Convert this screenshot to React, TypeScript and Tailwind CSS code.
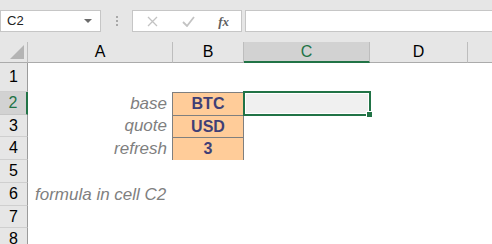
import React from "react"

const font = { fontFamily: '"Liberation Sans", Arial, sans-serif' }

const rowHeights = [29, 23, 22, 23, 23, 23, 22, 22]
const cols = ["A", "B", "C", "D", ""]

function RowHeader({ n, active }: { n: number; active?: boolean }) {
  return (
    <div
      className={
        "flex items-center justify-center text-[16px] border-b " +
        (active
          ? "bg-[#d2d2d2] text-[#217346] border-b-[#c6c6c6] border-r-2 border-r-[#217346]"
          : "bg-[#e6e6e6] text-black border-b-[#cfcfcf] border-r border-r-[#9b9b9b]")
      }
    >
      {n}
    </div>
  )
}

function InputCell({ children }: { children: React.ReactNode }) {
  return (
    <div className="bg-[#ffcc99] border border-[#7f7f7f] -mb-px -ml-px flex items-center justify-center text-[16px] font-bold text-[#3f3f76]">
      {children}
    </div>
  )
}

function Label({ children }: { children: React.ReactNode }) {
  return (
    <div className="bg-white flex items-center justify-end pr-[6px] text-[17px] italic text-[#7f7f7f]">{children}</div>
  )
}

export default function App() {
  return (
    <div className="w-[492px] h-[244px] overflow-hidden bg-[#e6e6e6] select-none" style={font}>
      {/* formula bar */}
      <div className="flex items-center h-[42px]">
        <div className="w-[101px] h-[22px] bg-white border border-[#c6c6c6] flex items-center justify-between pl-[6px] pr-[8px] text-[13px] text-[#222]">
          <span>C2</span>
          <span className="w-0 h-0 border-l-[4px] border-r-[4px] border-t-[4px] border-l-transparent border-r-transparent border-t-[#6b6b6b]" />
        </div>
        <div className="w-[31px] flex flex-col items-center gap-[2px]">
          <span className="w-[2px] h-[2px] bg-[#a8a8a8]" />
          <span className="w-[2px] h-[2px] bg-[#a8a8a8]" />
          <span className="w-[2px] h-[2px] bg-[#a8a8a8]" />
        </div>
        <div className="w-[110px] h-[22px] bg-white border border-[#c6c6c6] flex items-center justify-between pl-[14px] pr-[12px]">
          <svg width="11" height="11" viewBox="0 0 11 11">
            <path d="M1 1 L10 10 M10 1 L1 10" stroke="#c3c3c3" strokeWidth="1.3" fill="none" />
          </svg>
          <svg width="13" height="11" viewBox="0 0 13 11">
            <path d="M1 6 L5 10 L12 1" stroke="#c3c3c3" strokeWidth="1.8" fill="none" />
          </svg>
          <span
            className="text-[13px] italic font-bold text-[#5f5f5f] leading-none"
            style={{ fontFamily: '"Liberation Serif", "Times New Roman", serif' }}
          >
            fx
          </span>
        </div>
        <div className="ml-[3px] flex-1 h-[22px] bg-white border border-[#c6c6c6] border-r-0" />
      </div>

      {/* sheet */}
      <div
        className="grid grid-cols-[28px_145px_71px_126px_98px_1fr]"
        style={{ gridTemplateRows: `21px ${rowHeights.map((h) => h + "px").join(" ")}` }}
      >
        {/* corner */}
        <div className="relative bg-[#e6e6e6] border-r border-r-[#bdbdbd] border-b border-b-[#ababab]">
          <svg className="absolute right-[3px] bottom-[3px]" width="14" height="14" viewBox="0 0 14 14">
            <path d="M14 0 L14 14 L0 14 Z" fill="#b4b4b4" />
          </svg>
        </div>
        {cols.map((c, i) =>
          c === "C" ? (
            <div
              key={i}
              className="flex items-center justify-center text-[16px] text-[#217346] bg-[#d2d2d2] border-r border-r-[#bdbdbd] border-b-2 border-b-[#217346]"
            >
              {c}
            </div>
          ) : (
            <div
              key={i}
              className={
                "flex items-center justify-center text-[16px] text-black bg-[#e6e6e6] border-b border-b-[#ababab] " +
                (i < 4 ? "border-r border-r-[#bdbdbd]" : "")
              }
            >
              {c}
            </div>
          ),
        )}

        {/* row 1 */}
        <RowHeader n={1} />
        <div className="col-span-5 bg-white" />

        {/* row 2 */}
        <RowHeader n={2} active />
        <Label>base</Label>
        <InputCell>BTC</InputCell>
        <div className="relative bg-white">
          <div className="absolute -left-px -top-px -right-px -bottom-px border-2 border-[#217346] z-10">
            <div className="w-full h-full border border-white bg-[#f0f0f0]" />
            <div className="absolute -right-[4px] -bottom-[4px] w-[7px] h-[7px] bg-[#217346] border border-white" />
          </div>
        </div>
        <div className="col-span-2 bg-white" />

        {/* row 3 */}
        <RowHeader n={3} />
        <Label>quote</Label>
        <InputCell>USD</InputCell>
        <div className="col-span-3 bg-white" />

        {/* row 4 */}
        <RowHeader n={4} />
        <Label>refresh</Label>
        <InputCell>3</InputCell>
        <div className="col-span-3 bg-white" />

        {/* row 5 */}
        <RowHeader n={5} />
        <div className="col-span-5 bg-white" />

        {/* row 6 */}
        <RowHeader n={6} />
        <div className="col-span-5 bg-white flex items-center pl-[7px] text-[17px] italic text-[#7f7f7f]">
          formula in cell C2
        </div>

        {/* row 7 */}
        <RowHeader n={7} />
        <div className="col-span-5 bg-white" />

        {/* row 8 */}
        <RowHeader n={8} />
        <div className="col-span-5 bg-white" />
      </div>
    </div>
  )
}
